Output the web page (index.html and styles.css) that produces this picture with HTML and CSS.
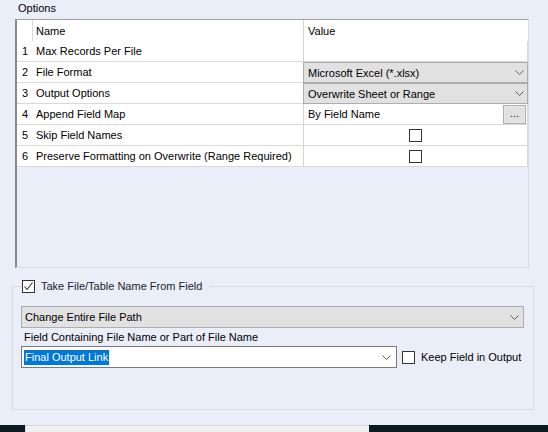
FILE: index.html
```html
<!DOCTYPE html>
<html>
<head>
<meta charset="utf-8">
<link rel="stylesheet" href="styles.css">
</head>
<body>
<div class="options-label">Options</div>
<div class="grid">
  <div class="row header">
    <div class="num"></div>
    <div class="name">Name</div>
    <div class="value"><span class="val-text">Value</span></div>
  </div>
  <div class="row">
    <div class="num">1</div>
    <div class="name">Max Records Per File</div>
    <div class="value"></div>
  </div>
  <div class="row">
    <div class="num">2</div>
    <div class="name">File Format</div>
    <div class="value">
      <div class="cell-combo"><span>Microsoft Excel (*.xlsx)</span>
        <svg class="chev" width="9" height="5" viewBox="0 0 9 5"><polyline points="0.5,0.5 4.5,4.5 8.5,0.5" fill="none" stroke="#606060" stroke-width="1"/></svg>
      </div>
    </div>
  </div>
  <div class="row">
    <div class="num">3</div>
    <div class="name">Output Options</div>
    <div class="value">
      <div class="cell-combo"><span>Overwrite Sheet or Range</span>
        <svg class="chev" width="9" height="5" viewBox="0 0 9 5"><polyline points="0.5,0.5 4.5,4.5 8.5,0.5" fill="none" stroke="#606060" stroke-width="1"/></svg>
      </div>
    </div>
  </div>
  <div class="row">
    <div class="num">4</div>
    <div class="name">Append Field Map</div>
    <div class="value split"><span class="val-text">By Field Name</span><div class="dots">...</div></div>
  </div>
  <div class="row">
    <div class="num">5</div>
    <div class="name">Skip Field Names</div>
    <div class="value center"><div class="checkbox"></div></div>
  </div>
  <div class="row">
    <div class="num">6</div>
    <div class="name">Preserve Formatting on Overwrite (Range Required)</div>
    <div class="value center"><div class="checkbox"></div></div>
  </div>
</div>

<fieldset class="group">
  <legend class="group-legend"><span class="legend-inner"><span class="checkbox checked"><svg width="11" height="11" viewBox="0 0 11 11"><polyline points="1.5,5.5 4,8.5 9.5,1.5" fill="none" stroke="#333" stroke-width="1.1"/></svg></span><span class="legend-text">Take File/Table Name From Field</span></span></legend>
  <div class="combo">
    <span>Change Entire File Path</span>
    <svg class="chev" width="9" height="5" viewBox="0 0 9 5"><polyline points="0.5,0.5 4.5,4.5 8.5,0.5" fill="none" stroke="#606060" stroke-width="1"/></svg>
  </div>
  <div class="field-label">Field Containing File Name or Part of File Name</div>
  <div class="combo-row">
    <div class="combo2">
      <span class="selected">Final Output Link</span>
      <svg class="chev" width="9" height="5" viewBox="0 0 9 5"><polyline points="0.5,0.5 4.5,4.5 8.5,0.5" fill="none" stroke="#606060" stroke-width="1"/></svg>
    </div>
    <div class="checkbox keep-box"></div>
    <span class="keep-text">Keep Field in Output</span>
  </div>
</fieldset>

<div class="taskbar">
  <div class="tb-left"></div>
  <div class="tb-mid"></div>
  <div class="tb-right"></div>
</div>
</body>
</html>
```

FILE: styles.css
```css
* { box-sizing: border-box; }
html, body { margin: 0; padding: 0; }
body {
  width: 548px;
  height: 432px;
  overflow: hidden;
  background: #eaeef9;
  font-family: "Liberation Sans", Arial, sans-serif;
  font-size: 11px;
  color: #000;
}
.options-label {
  height: 19px;
  line-height: 17px;
  padding-left: 18px;
}
.grid {
  margin-left: 15px;
  width: 514px;
  height: 249px;
  border-top: 1px solid #a0a0a0;
  border-left: 2px solid #8a8a8a;
  border-right: 1px solid #dcdcdc;
  border-bottom: 1px solid #dcdcdc;
}
.row {
  display: flex;
  height: 21px;
  background: #fff;
  border-bottom: 1px solid #d9d9d9;
}
.row.header { border-bottom: none; }
.num {
  width: 16px;
  padding-left: 5px;
  line-height: 20px;
}
.header .num { border-right: 1px solid #d9d9d9; }
.header .num, .header .name, .header .val-text { line-height: 22px; }
.name {
  width: 270px;
  padding-left: 3px;
  line-height: 20px;
  white-space: nowrap;
}
.value {
  width: 225px;
  border-left: 1px solid #d4d4d4;
  border-right: 1px solid #d9d9d9;
  display: flex;
  align-items: center;
}
.header .value { border-right: none; align-items: flex-start; }
.val-text { padding-left: 4px; line-height: 20px; }
.value.split { justify-content: space-between; }
.value.center { justify-content: center; }
.cell-combo {
  flex: 1;
  align-self: flex-start;
  height: 21px;
  margin: 0 -1px -1px -1px;
  background: #e1e1e1;
  border: 1px solid #adadad;
  display: flex;
  align-items: center;
  justify-content: space-between;
  padding: 0 3px 0 4px;
}
.chev { display: block; }
.dots {
  width: 23px;
  height: 19px;
  margin-right: 1px;
  background: #e1e1e1;
  border: 1px solid #adadad;
  box-shadow: inset 0 0 0 1px #e8e8e8;
  text-align: center;
  line-height: 15px;
  color: #222;
}
.checkbox {
  width: 13px;
  height: 13px;
  border: 1px solid #333;
  background: #fff;
  flex: none;
}
.checkbox.checked {
  display: flex;
  align-items: center;
  justify-content: center;
}
.checkbox.checked svg { display: block; }

.group {
  margin: 11px 0 0 12px;
  width: 522px;
  border: 1px solid #d7d9e0;
  padding: 13px 9px 41px 8px;
  min-inline-size: auto;
}
.group-legend {
  padding: 0 7px 0 1px;
  height: 14px;
}
.legend-inner {
  display: flex;
  align-items: center;
  height: 14px;
}
.legend-text {
  margin-left: 6px;
  color: #1a1a2e;
  line-height: 14px;
}
.combo {
  height: 22px;
  background: #e1e1e1;
  border: 1px solid #adadad;
  display: flex;
  align-items: center;
  justify-content: space-between;
  padding: 0 4px 0 3px;
}
.field-label {
  height: 18px;
  line-height: 18px;
  padding-left: 3px;
}
.combo-row {
  display: flex;
  align-items: center;
  height: 22px;
}
.combo2 {
  width: 376px;
  height: 22px;
  background: #fff;
  border: 1px solid #7a7a7a;
  display: flex;
  align-items: center;
  justify-content: space-between;
  padding: 0 5px 0 2px;
}
.selected {
  background: #0078d7;
  color: #fff;
  line-height: 15px;
  padding: 0 1px;
}
.keep-box { margin-left: 5px; }
.keep-text { margin-left: 6px; }

.taskbar {
  margin-top: 15px;
  height: 7px;
  display: flex;
}
.tb-left { width: 25px; background: #0c1a21; }
.tb-mid {
  width: 344px;
  background: #f0f0f0;
  border-top: 1px solid #d6d6d6;
  border-left: 1px solid #d6d6d6;
}
.tb-right { flex: 1; background: #0c1a21; }
```
